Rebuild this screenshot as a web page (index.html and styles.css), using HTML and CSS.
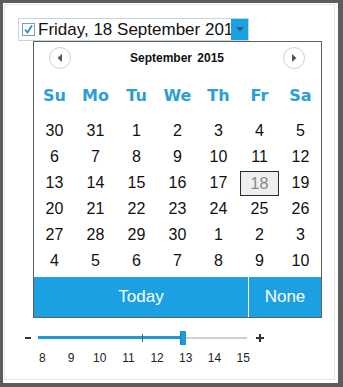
FILE: index.html
```html
<!DOCTYPE html>
<html lang="en">
<head>
<meta charset="utf-8">
<title>Date picker</title>
<link rel="stylesheet" href="styles.css">
</head>
<body>
<div class="frame">
  <div class="panel">
    <div class="picker">
      <span class="check">
        <svg width="11" height="11" viewBox="0 0 11 11"><path d="M2 5.5 L4.5 8.5 L9 1.5" fill="none" stroke="#2a8fd0" stroke-width="1.8"/></svg>
      </span>
      <span class="value">Friday, 18 September 2015</span>
      <span class="drop">
        <svg width="8" height="5" viewBox="0 0 8 5"><path d="M0 0 L8 0 L4 4.5 Z" fill="#2e5f7e"/></svg>
      </span>
    </div>
    <div class="popup">
      <div class="head">
        <span class="nav"><svg width="6" height="8" viewBox="0 0 6 8"><path d="M5 0 L5 8 L0.5 4 Z" fill="#555"/></svg></span>
        <span class="title">September 2015</span>
        <span class="nav"><svg width="6" height="8" viewBox="0 0 6 8"><path d="M1 0 L1 8 L5.5 4 Z" fill="#555"/></svg></span>
      </div>
      <div class="weekdays">
        <span>Su</span><span>Mo</span><span>Tu</span><span>We</span><span>Th</span><span>Fr</span><span>Sa</span>
      </div>
      <div class="days">
        <span>30</span><span>31</span><span>1</span><span>2</span><span>3</span><span>4</span><span>5</span>
        <span>6</span><span>7</span><span>8</span><span>9</span><span>10</span><span>11</span><span>12</span>
        <span>13</span><span>14</span><span>15</span><span>16</span><span>17</span><span class="selected">18</span><span>19</span>
        <span>20</span><span>21</span><span>22</span><span>23</span><span>24</span><span>25</span><span>26</span>
        <span>27</span><span>28</span><span>29</span><span>30</span><span>1</span><span>2</span><span>3</span>
        <span>4</span><span>5</span><span>6</span><span>7</span><span>8</span><span>9</span><span>10</span>
      </div>
      <div class="foot">
        <span class="today">Today</span>
        <span class="none">None</span>
      </div>
    </div>
    <div class="slider">
      <span class="minus"></span>
      <div class="track">
        <span class="fill"></span>
        <span class="tick"></span>
        <span class="thumb"></span>
      </div>
      <span class="plus"></span>
    </div>
    <div class="labels">
      <span>8</span><span>9</span><span>10</span><span>11</span><span>12</span><span>13</span><span>14</span><span>15</span>
    </div>
  </div>
</div>
</body>
</html>
```
FILE: styles.css
```css
html {
  background: #5d5d5d;
}
body {
  margin: 0;
  font-family: "Liberation Sans", Arial, sans-serif;
  color: #111;
}
.frame {
  margin: 3px 0 0 3px;
  width: 335px;
  height: 380px;
  background: #fff;
  padding: 1px 3px 3px 1px;
  box-sizing: border-box;
}
.panel {
  height: 100%;
  border: 1px solid #e6e6e6;
  box-sizing: border-box;
  padding: 13px 0 0 13px;
}

/* picker input */
.picker {
  width: 231px;
  height: 23px;
  box-sizing: border-box;
  border: 1px solid #bfd6e4;
  display: flex;
  align-items: stretch;
  overflow: hidden;
}
.check {
  width: 13px;
  height: 13px;
  box-sizing: border-box;
  border: 1px solid #7f9db2;
  margin: 4px 3px 0 3px;
  display: flex;
  align-items: center;
  justify-content: center;
  background: #fff;
}
.check svg { display: block; }
.value {
  flex: 1;
  min-width: 0;
  overflow: hidden;
  white-space: nowrap;
  font-size: 17px;
  line-height: 21px;
  color: #111;
}
.drop {
  width: 17px;
  background: #1ba1e2;
  display: flex;
  align-items: center;
  justify-content: center;
}
.drop svg { display: block; }

/* popup */
.popup {
  margin-left: 15px;
  width: 289px;
  box-sizing: border-box;
  border: 1px solid #5f5f5f;
  background: #fff;
}
.head {
  height: 34px;
  box-sizing: border-box;
  padding: 5px 16px 0 15px;
  display: flex;
  align-items: flex-start;
  justify-content: space-between;
}
.nav {
  width: 22px;
  height: 22px;
  box-sizing: border-box;
  border: 1px solid #d2d2d2;
  border-radius: 50%;
  display: flex;
  align-items: center;
  justify-content: center;
}
.nav svg { display: block; }
.title {
  font-weight: bold;
  font-size: 12px;
  line-height: 22px;
  word-spacing: 2px;
  color: #111;
}
.weekdays {
  height: 42px;
  display: grid;
  grid-template-columns: repeat(7, 41px);
}
.weekdays span {
  text-align: center;
  font-family: "DejaVu Sans", Verdana, sans-serif;
  font-weight: bold;
  font-size: 16px;
  line-height: 40px;
  color: #2a9fd6;
}
.days {
  display: grid;
  grid-template-columns: repeat(7, 41px);
  grid-auto-rows: 26px;
}
.days span {
  text-align: center;
  font-size: 16px;
  line-height: 26px;
  color: #111;
}
.days .selected {
  margin: 1px 1px 0 1px;
  border: 1px solid #2c2c2c;
  background: #efefef;
  color: #8a8a8a;
  line-height: 23px;
}
.foot {
  margin-top: 3px;
  height: 40px;
  display: flex;
  background: #1ba1e2;
  color: #fff;
  font-size: 17px;
}
.foot span {
  display: flex;
  align-items: center;
  justify-content: center;
}
.today {
  width: 214px;
  border-right: 1px solid #fff;
}
.none {
  flex: 1;
}

/* slider */
.slider {
  margin: 12px 0 0 4px;
  height: 16px;
  display: flex;
  align-items: center;
}
.minus {
  width: 10px;
  height: 16px;
  position: relative;
}
.minus::before {
  content: "";
  position: absolute;
  left: 3px;
  top: 7px;
  width: 6px;
  height: 2px;
  background: #333;
}
.plus {
  margin-left: 7px;
  width: 10px;
  height: 16px;
  position: relative;
}
.plus::before,
.plus::after {
  content: "";
  position: absolute;
  background: #333;
}
.plus::before {
  left: 2px;
  top: 7px;
  width: 8px;
  height: 2px;
}
.plus::after {
  left: 5px;
  top: 4px;
  width: 2px;
  height: 8px;
}
.track {
  margin-left: 6px;
  width: 209px;
  height: 16px;
  position: relative;
}
.track::before {
  content: "";
  position: absolute;
  left: 0;
  right: 0;
  top: 7px;
  height: 2px;
  background: #d0d0d0;
}
.fill {
  position: absolute;
  left: 0;
  top: 6px;
  width: 143px;
  height: 3px;
  background: #1f9ad6;
}
.tick {
  position: absolute;
  left: 104px;
  top: 4px;
  width: 1px;
  height: 8px;
  background: #3d6580;
}
.thumb {
  position: absolute;
  left: 142px;
  top: 1px;
  width: 6px;
  height: 14px;
  background: #1f9ad6;
  box-shadow: inset 1px 0 0 #1a7fb3;
}
.labels {
  margin: 5px 0 0 10px;
  display: grid;
  grid-template-columns: repeat(8, 28.7px);
}
.labels span {
  text-align: center;
  font-size: 12px;
  line-height: 14px;
  color: #222;
}
```
